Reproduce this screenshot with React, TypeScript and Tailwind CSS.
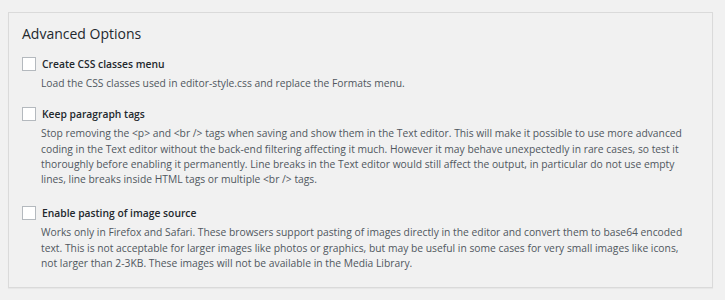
const options = [
  {
    id: "css-classes",
    label: "Create CSS classes menu",
    lines: ["Load the CSS classes used in editor-style.css and replace the Formats menu."],
    gap: "mb-4",
  },
  {
    id: "paragraph-tags",
    label: "Keep paragraph tags",
    lines: [
      "Stop removing the <p> and <br /> tags when saving and show them in the Text editor. This will make it possible to use more advanced",
      "coding in the Text editor without the back-end filtering affecting it much. However it may behave unexpectedly in rare cases, so test it",
      "thoroughly before enabling it permanently. Line breaks in the Text editor would still affect the output, in particular do not use empty",
      "lines, line breaks inside HTML tags or multiple <br /> tags.",
    ],
    gap: "mb-[19px]",
  },
  {
    id: "image-source",
    label: "Enable pasting of image source",
    lines: [
      "Works only in Firefox and Safari. These browsers support pasting of images directly in the editor and convert them to base64 encoded",
      "text. This is not acceptable for larger images like photos or graphics, but may be useful in some cases for very small images like icons,",
      "not larger than 2-3KB. These images will not be available in the Media Library.",
    ],
    gap: "",
  },
];

export default function App() {
  return (
    <div className="min-h-[300px] bg-[#f1f1f1] pl-2 pt-3 font-['Open_Sans',sans-serif]">
      <div className="w-[705px] h-[276px] border border-[#dadada] bg-[#f1f1f1] pl-[13px] pr-3 pt-[11px] shadow-[0_1px_1px_rgba(0,0,0,0.04)]">
        <h2 className="text-[14px] leading-[20px] text-[#23282d] font-normal mb-[13px]">Advanced Options</h2>
        {options.map((o) => (
          <div key={o.id} className={o.gap}>
            <label className="flex items-center gap-[6px] h-[14px]">
              <input type="checkbox" className="appearance-none w-[14px] h-[14px] border border-[#b4b9be] bg-white m-0 shrink-0" />
              <span className="text-[10.3px] leading-[14px] font-semibold text-[#23282d]">{o.label}</span>
            </label>
            <p className="mt-[5px] pl-[19px] text-[10.3px] leading-[15.3px] text-[#50575e] whitespace-nowrap">
              {o.lines.map((l, i) => (
                <span key={i} className="block">{l}</span>
              ))}
            </p>
          </div>
        ))}
      </div>
    </div>
  );
}
